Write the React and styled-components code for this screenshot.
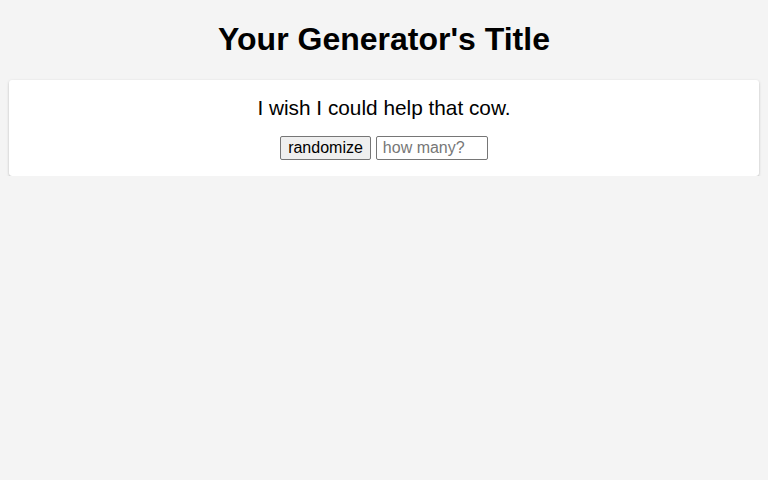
import React from "react";
import styled, { createGlobalStyle } from "styled-components";

const GlobalStyle = createGlobalStyle`
  body {
    margin: 0;
    background: #f4f4f4;
    font-family: "Liberation Sans", Arial, sans-serif;
    color: #000;
  }
`;

const Page = styled.div`
  padding: 0 9px;
`;

const Title = styled.h1`
  margin: 0;
  padding: 20px 0 22px;
  font-size: 32px;
  line-height: 38px;
  font-weight: bold;
  text-align: center;
`;

const Card = styled.div`
  background: #fff;
  border-radius: 3px;
  box-shadow: 0 1px 3px rgba(0, 0, 0, 0.2), 0 1px 1px rgba(0, 0, 0, 0.08);
  padding: 16px 0 16px;
  display: flex;
  flex-direction: column;
  align-items: center;
  gap: 17px;
`;

const Output = styled.p`
  margin: 0;
  font-size: 20.8px;
  line-height: 23px;
`;

const Controls = styled.div`
  display: flex;
  gap: 5px;
  align-items: center;
`;

const Button = styled.button`
  font-family: inherit;
  font-size: 16px;
  height: 24px;
  padding: 1px 7px;
  background: #efefef;
  border: 1px solid #767676;
  border-radius: 2px;
  color: #000;
`;

const Count = styled.input`
  font-family: inherit;
  font-size: 16px;
  width: 112px;
  height: 24px;
  box-sizing: border-box;
  padding: 1px 6px;
  border: 1px solid #767676;
  border-radius: 2px;
  &::placeholder {
    color: #777;
  }
`;

export default function App() {
  return (
    <Page>
      <GlobalStyle />
      <Title>Your Generator's Title</Title>
      <Card>
        <Output>I wish I could help that cow.</Output>
        <Controls>
          <Button>randomize</Button>
          <Count placeholder="how many?" />
        </Controls>
      </Card>
    </Page>
  );
}
